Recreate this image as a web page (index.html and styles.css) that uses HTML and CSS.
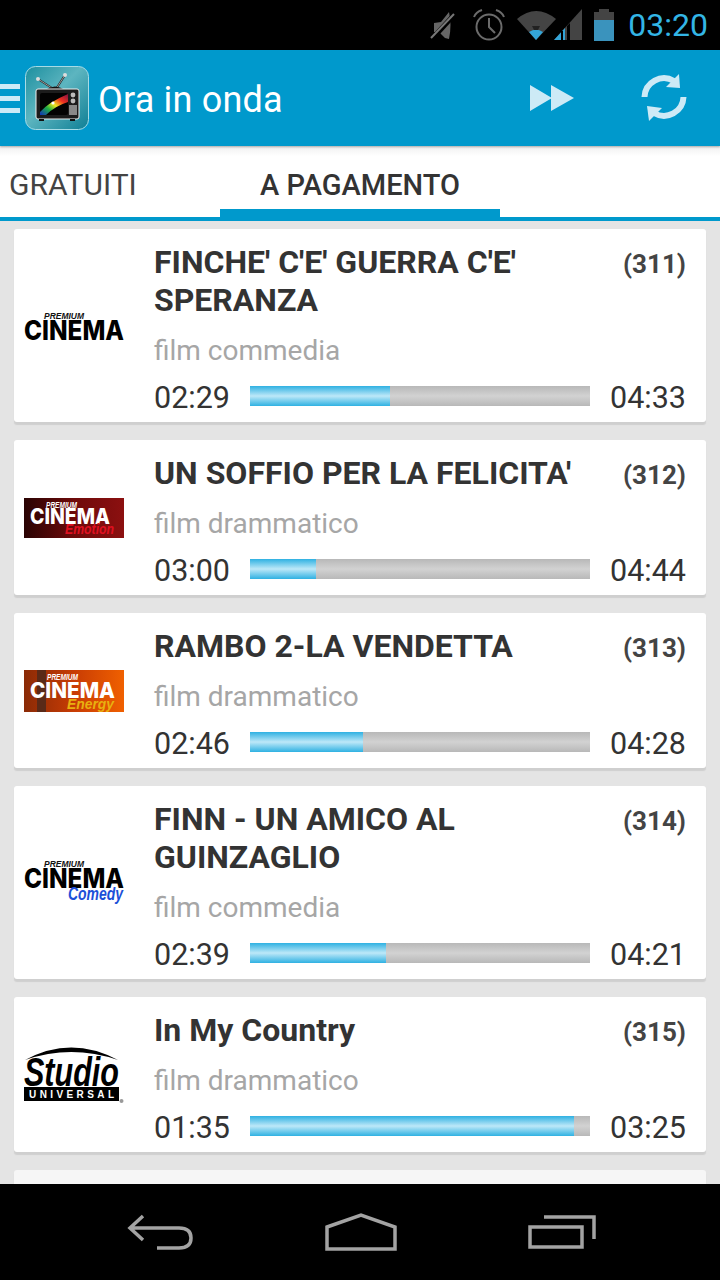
FILE: index.html
```html
<!DOCTYPE html>
<html lang="en">
<head>
    <meta charset="UTF-8">
    <meta name="viewport" content="width=device-width, initial-scale=1.0">
    <title>Ora in onda</title>
    <link rel="stylesheet" href="styles.css">
</head>
<body>

    <div class="status-bar">
        <svg class="st-mute" width="26" height="30" viewBox="0 0 26 30">
            <path d="M4 12 L11 11 L19 1 Q22 14 19 28 L15 27 L9 21 L4 21 Z" fill="#666"/>
            <path d="M2 28 L25 3" stroke="#000" stroke-width="5"/>
            <path d="M1 27 L24 3" stroke="#777" stroke-width="2"/>
        </svg>
        <svg class="st-alarm" width="32" height="32" viewBox="0 0 32 32">
            <circle cx="16" cy="18" r="12.5" fill="none" stroke="#6b6b6b" stroke-width="2"/>
            <path d="M16 9 V18 L22 24" fill="none" stroke="#6b6b6b" stroke-width="2"/>
            <path d="M1 8 Q3 3 9 1 M31 8 Q29 3 23 1" fill="none" stroke="#6b6b6b" stroke-width="2"/>
        </svg>
        <svg class="st-net" width="66" height="32" viewBox="0 0 66 32">
            <path d="M0 10 Q19 -6 39 10 L19 31 Z" fill="#444"/>
            <path d="M12 23 L19 31 L26 23 Q19 18 12 23 Z" fill="#33a5d8"/>
            <path d="M15 17 H23 L21 21 H17 Z" fill="#222"/>
            <path d="M37 31 L65 0 V31 Z" fill="#444"/>
            <path d="M37 31 L48 19 V31 Z" fill="#33a5d8"/>
            <path d="M50 17 V31 H53 V14 Z" fill="#000"/>
            <path d="M44 22 h2 v9 h-2 z" fill="#000"/>
        </svg>
        <svg class="st-batt" width="20" height="32" viewBox="0 0 20 32">
            <path d="M5 0 H15 V3 H20 V32 H0 V3 H5 Z" fill="#444"/>
            <rect y="11" width="20" height="21" fill="#3a93bd"/>
        </svg>
        <span class="clock">03:20</span>
    </div>

    <div class="action-bar">
        <div class="drawer-mark"><i></i><i></i><i></i></div>
        <svg class="app-icon" width="64" height="64" viewBox="0 0 64 64">
            <defs>
                <linearGradient id="appbg" x1="0" y1="0" x2="1" y2="1">
                    <stop offset="0" stop-color="#1c8f9f"/>
                    <stop offset="0.45" stop-color="#5db5c0"/>
                    <stop offset="1" stop-color="#0f7f95"/>
                </linearGradient>
                <linearGradient id="spectrum" x1="0" y1="1" x2="1" y2="0">
                    <stop offset="0" stop-color="#1030c0"/>
                    <stop offset="0.3" stop-color="#20b040"/>
                    <stop offset="0.5" stop-color="#f0e820"/>
                    <stop offset="0.72" stop-color="#f03020"/>
                    <stop offset="1" stop-color="#801040"/>
                </linearGradient>
            </defs>
            <rect x="0.5" y="0.5" width="63" height="63" rx="10" fill="url(#appbg)" stroke="#a6dbe6"/>
            <path d="M13 13 L30 24 M40 9 L31 23" stroke="#222" stroke-width="2"/>
            <path d="M13 13 L30 24 M40 9 L31 23" stroke="#ccc" stroke-width="0.7"/>
            <circle cx="13" cy="13" r="2" fill="#ddd"/>
            <circle cx="40" cy="9" r="2" fill="#ddd"/>
            <path d="M20 24 Q30 17 40 24 Z" fill="#111"/>
            <rect x="11" y="23" width="43" height="30" rx="2" fill="#1c1c1c" stroke="#eee"/>
            <rect x="15" y="27" width="28" height="22" rx="2" fill="#030303"/>
            <path d="M15 46 Q24 36 43 28 V36 Q30 40 21 49 H15 Z" fill="url(#spectrum)"/>
            <circle cx="28" cy="37" r="1.6" fill="#fff"/>
            <circle cx="48" cy="29" r="2.4" fill="#bbb"/>
            <circle cx="48" cy="35" r="2.4" fill="#bbb"/>
            <rect x="44" y="39" width="8" height="10" fill="#888"/>
            <path d="M14 53 h5 v2 h-5 z M45 53 h5 v2 h-5 z" fill="#111"/>
        </svg>
        <span class="app-title">Ora in onda</span>
        <svg class="btn-skip" width="44" height="28" viewBox="0 0 44 28">
            <path d="M0 1 L22 14 L0 27 Z M21 1 L44 14 L21 27 Z" fill="#cdeaf6"/>
        </svg>
        <svg class="btn-sync" width="46" height="50" viewBox="0 0 46 50">
            <path d="M3.500 24 A19.500 19.500 0 0 1 33 8" fill="none" stroke="#cdeaf6" stroke-width="6"/>
            <path d="M38 1 L39 15 L25 14 Z" fill="#cdeaf6"/>
            <path d="M42.500 24 A19.500 19.500 0 0 1 13 40" fill="none" stroke="#cdeaf6" stroke-width="6"/>
            <path d="M8 48 L6 33 L21 35 Z" fill="#cdeaf6"/>
        </svg>
    </div>

    <div class="tabs">
        <div class="tab tab-free">GRATUITI</div>
        <div class="tab tab-paid">A PAGAMENTO</div>
    </div>

    <div class="list">
        <div class="card">
            <div class="logo">
                <svg width="100" height="30" viewBox="0 0 100 30">
                    <text x="20" y="8" class="lg-premium" textLength="40" lengthAdjust="spacingAndGlyphs">PREMIUM</text>
                    <text x="0" y="29" class="lg-cinema" textLength="100" lengthAdjust="spacingAndGlyphs">CINEMA</text>
                </svg>
            </div>
            <div class="info">
                <div class="head">
                    <div class="title">FINCHE' C'E' GUERRA C'E' SPERANZA</div>
                    <div class="num">(311)</div>
                </div>
                <div class="genre">film commedia</div>
                <div class="times">
                    <span class="time">02:29</span>
                    <div class="bar"><div class="fill" style="width: 41.2%"></div></div>
                    <span class="time">04:33</span>
                </div>
            </div>
        </div>

        <div class="card">
            <div class="logo">
                <svg width="100" height="40" viewBox="0 0 100 40">
                    <defs>
                        <linearGradient id="emo" x1="0" y1="0" x2="1" y2="0">
                            <stop offset="0" stop-color="#2a0404"/>
                            <stop offset="0.5" stop-color="#6e0a0a"/>
                            <stop offset="1" stop-color="#8c1010"/>
                        </linearGradient>
                    </defs>
                    <rect width="100" height="40" fill="url(#emo)"/>
                    <text x="22" y="10" class="lg-premium lg-white" textLength="31" lengthAdjust="spacingAndGlyphs">PREMIUM</text>
                    <text x="6" y="26" class="lg-cinema lg-small lg-white" textLength="80" lengthAdjust="spacingAndGlyphs">CINEMA</text>
                    <text x="41" y="36" class="lg-sub lg-red" textLength="49" lengthAdjust="spacingAndGlyphs">Emotion</text>
                </svg>
            </div>
            <div class="info">
                <div class="head">
                    <div class="title">UN SOFFIO PER LA FELICITA'</div>
                    <div class="num">(312)</div>
                </div>
                <div class="genre">film drammatico</div>
                <div class="times">
                    <span class="time">03:00</span>
                    <div class="bar"><div class="fill" style="width: 19.4%"></div></div>
                    <span class="time">04:44</span>
                </div>
            </div>
        </div>

        <div class="card">
            <div class="logo">
                <svg width="100" height="42" viewBox="0 0 100 42">
                    <defs>
                        <linearGradient id="ene" x1="0" y1="0" x2="1" y2="0">
                            <stop offset="0" stop-color="#8a2a06"/>
                            <stop offset="0.5" stop-color="#c83c04"/>
                            <stop offset="1" stop-color="#f06000"/>
                        </linearGradient>
                    </defs>
                    <rect width="100" height="42" fill="url(#ene)"/>
                    <rect x="13" width="9" height="42" fill="#5a2a18"/>
                    <text x="23" y="10" class="lg-premium lg-white" textLength="31" lengthAdjust="spacingAndGlyphs">PREMIUM</text>
                    <text x="6" y="28" class="lg-cinema lg-small lg-white" textLength="85" lengthAdjust="spacingAndGlyphs">CINEMA</text>
                    <text x="43" y="39" class="lg-sub lg-yellow" textLength="47" lengthAdjust="spacingAndGlyphs">Energy</text>
                </svg>
            </div>
            <div class="info">
                <div class="head">
                    <div class="title">RAMBO 2-LA VENDETTA</div>
                    <div class="num">(313)</div>
                </div>
                <div class="genre">film drammatico</div>
                <div class="times">
                    <span class="time">02:46</span>
                    <div class="bar"><div class="fill" style="width: 33.2%"></div></div>
                    <span class="time">04:28</span>
                </div>
            </div>
        </div>

        <div class="card">
            <div class="logo">
                <svg width="100" height="48" viewBox="0 0 100 48">
                    <text x="20" y="8" class="lg-premium" textLength="40" lengthAdjust="spacingAndGlyphs">PREMIUM</text>
                    <text x="0" y="29" class="lg-cinema" textLength="100" lengthAdjust="spacingAndGlyphs">CINEMA</text>
                    <text x="44" y="41" class="lg-sub lg-sub-big lg-blue" textLength="55" lengthAdjust="spacingAndGlyphs">Comedy</text>
                </svg>
            </div>
            <div class="info">
                <div class="head">
                    <div class="title">FINN - UN AMICO AL GUINZAGLIO</div>
                    <div class="num">(314)</div>
                </div>
                <div class="genre">film commedia</div>
                <div class="times">
                    <span class="time">02:39</span>
                    <div class="bar"><div class="fill" style="width: 40%"></div></div>
                    <span class="time">04:21</span>
                </div>
            </div>
        </div>

        <div class="card">
            <div class="logo">
                <svg width="100" height="56" viewBox="0 0 100 56">
                    <path d="M1 13 Q47 -12 94 13 Q47 -3 1 13 Z" fill="#000"/>
                    <text x="0" y="39" class="lg-studio" textLength="95" lengthAdjust="spacingAndGlyphs">Studio</text>
                    <rect y="40" width="95" height="14" fill="#000"/>
                    <text x="5" y="51" class="lg-universal" textLength="85">UNIVERSAL</text>
                    <circle cx="97.500" cy="54" r="2" fill="#999"/>
                </svg>
            </div>
            <div class="info">
                <div class="head">
                    <div class="title">In My Country</div>
                    <div class="num">(315)</div>
                </div>
                <div class="genre">film drammatico</div>
                <div class="times">
                    <span class="time">01:35</span>
                    <div class="bar"><div class="fill" style="width: 95.3%"></div></div>
                    <span class="time">03:25</span>
                </div>
            </div>
        </div>

        <div class="card card-next"></div>
    </div>

    <div class="nav-bar">
        <svg width="66" height="36" viewBox="0 0 66 36">
            <path d="M16 2 L3 14 L16 26 M3 14 H52 Q64 14 64 24 Q64 34 52 34 H30" fill="none" stroke="#a3a3a3" stroke-width="3.500"/>
        </svg>
        <svg width="72" height="38" viewBox="0 0 72 38">
            <path d="M2 14 L36 2 L70 14 V36 H2 Z" fill="none" stroke="#a3a3a3" stroke-width="3.500"/>
        </svg>
        <svg width="68" height="34" viewBox="0 0 68 34">
            <path d="M16 2 H66 V24" fill="none" stroke="#a3a3a3" stroke-width="3.500"/>
            <rect x="2" y="12" width="52" height="20" fill="none" stroke="#a3a3a3" stroke-width="3.500"/>
        </svg>
    </div>

</body>
</html>
```

FILE: styles.css
```css
* {
    box-sizing: border-box;
}
html, body {
    margin: 0;
    padding: 0;
}
body {
    width: 720px;
    height: 1280px;
    display: flex;
    flex-direction: column;
    overflow: hidden;
    font-family: Roboto, "Liberation Sans", sans-serif;
    background-color: #e4e4e4;
}

.status-bar {
    height: 50px;
    flex: none;
    display: flex;
    align-items: center;
    justify-content: flex-end;
    padding-right: 12px;
    background-color: #000;
}
.st-mute {
    margin-right: 17px;
    margin-top: 2px;
}
.st-alarm {
    margin-right: 12px;
}
.st-net {
    margin-right: 11px;
}
.st-batt {
    margin-right: 14px;
}
.clock {
    color: #33b5e5;
    font-size: 32px;
}

.action-bar {
    height: 96px;
    flex: none;
    display: flex;
    align-items: center;
    background-color: #0099cc;
    position: relative;
    z-index: 1;
    box-shadow: 0 1px 2px rgba(0, 0, 0, 0.3);
}
.drawer-mark {
    width: 20px;
    margin-right: 5px;
    display: flex;
    flex-direction: column;
    gap: 7px;
}
.drawer-mark i {
    display: block;
    height: 5px;
    background-color: #cdeaf6;
}
.app-title {
    margin-left: 9px;
    padding-top: 3px;
    color: #fff;
    font-size: 36px;
    letter-spacing: 0.2px;
}
.btn-skip {
    margin-left: auto;
    margin-right: 67px;
}
.btn-sync {
    margin-right: 33px;
}

.tabs {
    height: 75px;
    flex: none;
    display: flex;
    background: linear-gradient(#f0f0f0, #fff 10px);
    border-bottom: 4px solid #0099cc;
}
.tab {
    height: 71px;
    line-height: 78px;
    color: #444;
}
.tab-free {
    width: 220px;
    padding-left: 9px;
    font-size: 30px;
}
.tab-paid {
    width: 280px;
    height: 71px;
    text-align: center;
    font-size: 29px;
    font-weight: 500;
    color: #333;
    border-bottom: 8px solid #0099cc;
}

.list {
    flex: 1;
    min-height: 0;
    overflow: hidden;
    padding: 8px 14px 0;
    display: flex;
    flex-direction: column;
    gap: 18px;
}
.card {
    flex: none;
    display: flex;
    background-color: #fff;
    border-radius: 3px;
    box-shadow: 0 3px 1px #cfcfcf;
}
.card-next {
    height: 40px;
    background: #f6f6f6;
}
.logo {
    width: 140px;
    flex: none;
    padding-left: 10px;
    display: flex;
    align-items: center;
}
.logo svg {
    display: block;
    overflow: visible;
}
.lg-premium {
    font-family: "Liberation Sans", sans-serif;
    font-size: 9px;
    font-weight: bold;
    font-style: italic;
    fill: #111;
}
.lg-cinema {
    font-family: Inter, sans-serif;
    font-size: 27px;
    font-weight: 800;
    fill: #000;
}
.lg-small {
    font-size: 22px;
}
.lg-sub {
    font-family: "Liberation Sans", sans-serif;
    font-size: 14px;
    font-weight: bold;
    font-style: italic;
}
.lg-sub-big {
    font-size: 18px;
}
.lg-white {
    fill: #fff;
}
.lg-red {
    fill: #e01020;
}
.lg-yellow {
    fill: #e8b010;
}
.lg-blue {
    fill: #1c50d8;
}
.lg-studio {
    font-family: "Liberation Sans", sans-serif;
    font-size: 40px;
    font-weight: bold;
    font-style: italic;
    fill: #000;
}
.lg-universal {
    font-family: "Liberation Sans", sans-serif;
    font-size: 10px;
    font-weight: bold;
    fill: #fff;
}

.info {
    flex: 1;
    min-width: 0;
    padding: 14px 20px 9px 0;
}
.head {
    display: flex;
    justify-content: space-between;
    align-items: flex-start;
}
.title {
    width: 420px;
    font-size: 32px;
    line-height: 38px;
    font-weight: 700;
    color: #333;
}
.num {
    margin-top: 4px;
    font-size: 26px;
    line-height: 34px;
    font-weight: 700;
    color: #444;
}
.genre {
    margin-top: 14px;
    font-size: 28px;
    line-height: 36px;
    color: #a6a6a6;
}
.times {
    margin-top: 10px;
    height: 34px;
    display: flex;
    align-items: center;
    justify-content: space-between;
}
.time {
    padding-top: 2px;
    font-size: 30.5px;
    color: #333;
}
.bar {
    width: 340px;
    height: 20px;
    background: linear-gradient(#b8b8b8, #d2d2d2 50%, #b8b8b8);
}
.fill {
    height: 20px;
    background: linear-gradient(#2fb1e2, #bde8f8 50%, #2fb1e2);
}

.nav-bar {
    height: 96px;
    flex: none;
    display: flex;
    align-items: center;
    padding: 0 124px 0 127px;
    justify-content: space-between;
    background-color: #000;
}
```
